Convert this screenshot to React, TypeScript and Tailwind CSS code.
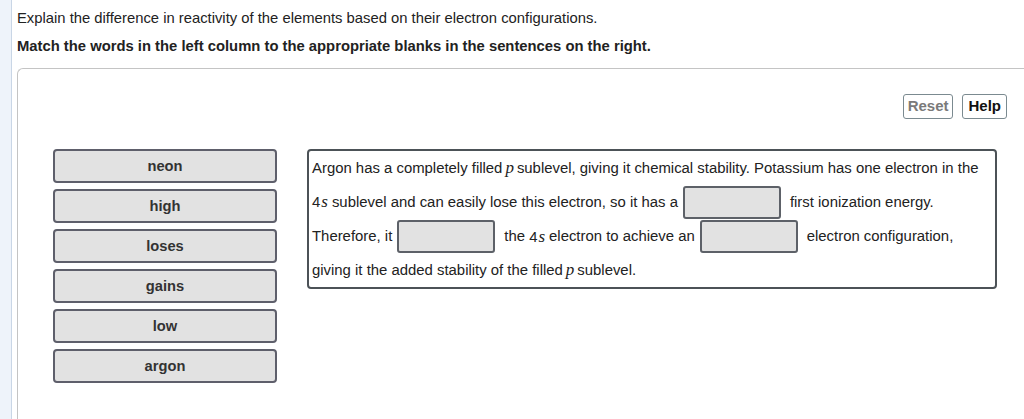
import React from "react";

const words = ["neon", "high", "loses", "gains", "low", "argon"];

const Var = ({ children }: { children: React.ReactNode }) => (
  <i className="font-['Liberation_Serif',serif] text-[17px] mx-[3px]">{children}</i>
);

// "4s" orbital label, no gap between the number and the letter
const Orbital = () => (
  <span className="mr-[4px]">
    4<i className="font-['Liberation_Serif',serif] text-[17px] ml-[1px]">s</i>
  </span>
);

const Blank = () => (
  <span className="inline-block w-[98px] h-[33px] ml-[5px] mr-[9px] rounded-[3px] border-2 border-[#5d6168] bg-[#e2e2e2]" />
);

const App = () => {
  return (
    <div className="w-[1024px] h-[419px] overflow-hidden flex bg-white font-['Liberation_Sans',Arial,sans-serif] text-[#222]">
      <div className="w-[12px] shrink-0 bg-[#eef3fa] border-r border-[#c9d6e6]" />
      <div className="flex-1 pl-[5px]">
        <p className="pt-[9px] text-[14.8px] leading-[18px]">
          Explain the difference in reactivity of the elements based on their electron configurations.
        </p>
        <p className="mt-[10px] text-[14.8px] leading-[18px] font-bold">
          Match the words in the left column to the appropriate blanks in the sentences on the right.
        </p>
        <div className="mt-[13px] h-[400px] border-t border-l border-[#c4c4c4] rounded-tl-[6px] pl-[35px] pr-[17px] pt-[25px]">
          <div className="flex justify-end gap-[9px]">
            <button className="h-[25px] px-[4px] rounded-[3px] border border-[#7b8a90] text-[15px] font-bold text-[#7a7a7a]">
              Reset
            </button>
            <button className="h-[25px] px-[5px] rounded-[3px] border border-[#7b8a90] text-[15px] font-bold text-[#111]">
              Help
            </button>
          </div>
          <div className="mt-[30px] flex items-start gap-[30px]">
            <div className="flex flex-col gap-[6px] w-[224px]">
              {words.map((w) => (
                <div
                  key={w}
                  className="h-[34px] flex items-center justify-center rounded-[4px] border-2 border-[#5e5f6b] bg-[#e2e2e2] text-[14.7px] font-bold text-[#333]"
                >
                  {w}
                </div>
              ))}
            </div>
            <div className="w-[690px] h-[140px] rounded-[4px] border-2 border-[#4c5257] pl-[3px] text-[14.9px] text-[#222] whitespace-nowrap">
              <div className="h-[34px] flex items-center">
                Argon has a completely filled <Var>p</Var> sublevel, giving it chemical stability. Potassium has one electron in the
              </div>
              <div className="h-[34px] flex items-center whitespace-pre">
                <Orbital />sublevel and can easily lose this electron, so it has a<Blank />first ionization energy.
              </div>
              <div className="h-[35px] flex items-center whitespace-pre">
                Therefore, it<Blank />the <Orbital />electron to achieve an<Blank />electron configuration,
              </div>
              <div className="h-[32px] flex items-center">
                giving it the added stability of the filled <Var>p</Var> sublevel.
              </div>
            </div>
          </div>
        </div>
      </div>
    </div>
  );
};

export default App;
